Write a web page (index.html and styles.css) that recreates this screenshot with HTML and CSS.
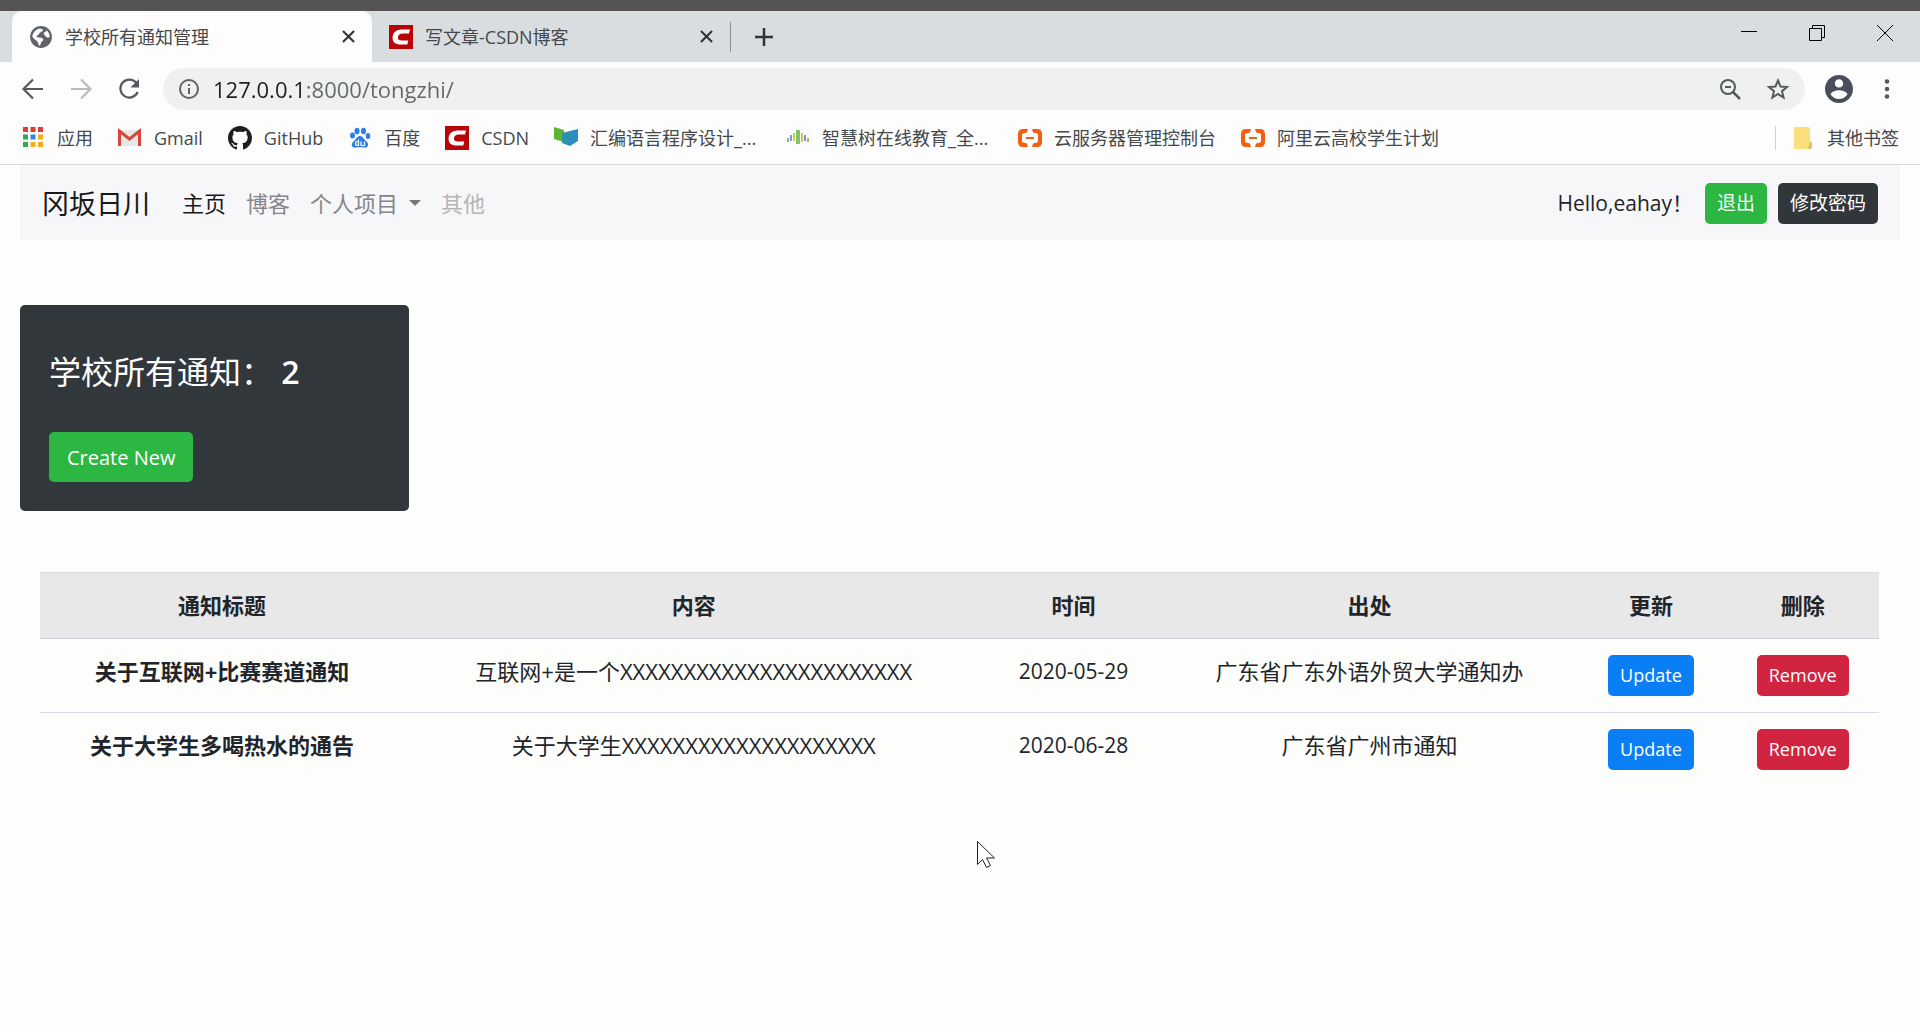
FILE: index.html
```html
<!DOCTYPE html>
<html lang="zh-CN">
<head>
<meta charset="utf-8">
<meta name="viewport" content="width=device-width, initial-scale=1">
<title>学校所有通知管理</title>
<link rel="stylesheet" href="styles.css">
</head>
<body>
<svg class="defs" aria-hidden="true">
  <symbol id="csdn" viewBox="0 0 24 24"><path fill="#b80508" d="M0 0h24v24H0z"/><path fill="#fff" d="M21 4.500l-1 4h-6c-3.200 0-4.700 1.200-5 3.500-.3 2.400.9 3.500 4 3.500h6.300l-1 4H12c-6 0-8.800-2.500-8.400-7.500C4 7 7.500 4.500 13.500 4.500z"/></symbol>
  <symbol id="aliyun" viewBox="0 0 24 24"><path fill="#f2600f" d="M10 3L9 6.500 5 7.500q-1 .3-1 1.500v6q0 1.200 1 1.500l4 1L10 21H5q-5 0-5-5V8q0-5 5-5zM14 3l1 3.500 4 1q1 .3 1 1.500v6q0 1.200-1 1.500l-4 1L14 21h5q5 0 5-5V8q0-5-5-5zM8 11h8v2H8z"/></symbol>
  <symbol id="close" viewBox="0 0 14 14"><path fill="none" stroke="#333" stroke-width="2.200" d="M1 1l12 12M13 1L1 13"/></symbol>
</svg>

<header class="browser">
  <div class="desktop-edge"></div>
  <div class="tab-strip">
    <div class="tab tab-active">
      <svg class="icon" viewBox="1 1 22 22" fill="#5f6368"><path d="M12 2C6.480 2 2 6.480 2 12s4.480 10 10 10 10-4.480 10-10S17.520 2 12 2z"/><path fill="#fdfdfd" d="M4 11.500C4.500 8 7.500 4.800 11 4.200L13.500 5c1.200 1-1 2.500-2.500 3-1.500.6-.5 2-2 2.500-1.500.4-1.500 1.500 0 1.700 2 .2 4.500.3 5 2 .4 1.600-1.500 1.600-2 3-.3 1-.5 2.500-1.500 2.800C9.500 20 9.500 17 8.500 16c-1.500-1.500-3.500-2.500-4.500-4.500zM17 5.800c1.800 1.200 3 3.500 3 6.200-1.500.8-3 .5-3.500-.5-.6-1.300-2-1.500-2-2.800 0-1.500 2.500-1.200 2.500-2.900z"/></svg>
      <span class="tab-title">学校所有通知管理</span>
      <button class="plain" aria-label="关闭标签页"><svg class="close-icon"><use href="#close"/></svg></button>
    </div>
    <div class="tab">
      <svg class="icon"><use href="#csdn"/></svg>
      <span class="tab-title">写文章-CSDN博客</span>
      <button class="plain" aria-label="关闭标签页"><svg class="close-icon"><use href="#close"/></svg></button>
    </div>
    <button class="plain new-tab" aria-label="新标签页"><svg width="18" height="18" viewBox="0 0 18 18"><path stroke="#333" stroke-width="2.500" d="M9 0v18M0 9h18"/></svg></button>
    <div class="window-controls">
      <button class="plain" aria-label="最小化"><svg width="16" height="16" viewBox="0 0 16 16"><path stroke="#000" d="M0 6.500h16"/></svg></button>
      <button class="plain" aria-label="还原"><svg width="16" height="16" viewBox="0 0 16 16"><path fill="none" stroke="#000" d="M.5 3.500h12v12H.5zM3.500 3.500v-3h12v12h-3"/></svg></button>
      <button class="plain" aria-label="关闭"><svg width="16" height="16" viewBox="0 0 16 16"><path stroke="#000" d="M0 0l16 16M16 0L0 16"/></svg></button>
    </div>
  </div>

  <div class="toolbar">
    <button class="plain" aria-label="后退"><svg class="icon" viewBox="0 0 24 24"><path fill="none" stroke="#555a5e" stroke-width="2.200" d="M22 12H3M12 2.500L2.500 12l9.500 9.500"/></svg></button>
    <button class="plain" aria-label="前进"><svg class="icon" viewBox="0 0 24 24"><path fill="none" stroke="#bbb" stroke-width="2.200" d="M2 12h19M12 2.500l9.500 9.500-9.500 9.500"/></svg></button>
    <button class="plain" aria-label="刷新"><svg class="icon" viewBox="0 0 24 24"><path fill="none" stroke="#555a5e" stroke-width="2.200" d="M19.500 6A9 9 0 1 0 20.700 15"/><path fill="#555a5e" d="M22 2v8.500h-8.500z"/></svg></button>
    <div class="omnibox">
      <svg class="icon" viewBox="0 0 24 24"><circle cx="12" cy="12" r="9" fill="none" stroke="#5f6368" stroke-width="2"/><path fill="#5f6368" d="M11 11h2v6h-2zM11 7h2v2h-2z"/></svg>
      <input class="address" type="text" aria-label="地址" value="127.0.0.1:8000/tongzhi/">
      <button class="plain" aria-label="缩放"><svg class="icon" viewBox="0 0 24 24"><circle cx="10" cy="10" r="7" fill="none" stroke="#555a5e" stroke-width="2"/><path stroke="#555a5e" stroke-width="2.500" d="M15 15l7 7"/><path stroke="#555a5e" stroke-width="2" d="M7 10h6"/></svg></button>
      <button class="plain" aria-label="收藏"><svg class="icon" viewBox="0 0 24 24"><path fill="none" stroke="#555a5e" stroke-width="2" d="M12 3.500l2.500 6 6.500.5-5 4.200 1.600 6.300L12 17l-5.600 3.500L8 14.200 3 10l6.500-.5z"/></svg></button>
    </div>
    <button class="plain profile" aria-label="用户"><svg width="28" height="28" viewBox="2 2 20 20" fill="#494e58"><path d="M12 2C6.480 2 2 6.480 2 12s4.480 10 10 10 10-4.480 10-10S17.520 2 12 2zm0 3c1.660 0 3 1.340 3 3s-1.340 3-3 3-3-1.340-3-3 1.340-3 3-3zm0 14.200c-2.500 0-4.710-1.280-6-3.220.03-1.990 4-3.080 6-3.080 1.990 0 5.970 1.090 6 3.080-1.290 1.940-3.500 3.220-6 3.220z"/></svg></button>
    <button class="plain" aria-label="菜单"><svg class="icon" viewBox="0 0 24 24" fill="#555a5e"><circle cx="12" cy="4.500" r="2.300"/><circle cx="12" cy="12" r="2.300"/><circle cx="12" cy="19.500" r="2.300"/></svg></button>
  </div>

  <nav class="bookmarks" aria-label="书签">
    <a href="#"><svg class="icon" viewBox="0 0 24 24"><path fill="#dd3b33" d="M2 1h5v5H2zM9.500 1h5v5h-5zM17 1h5v5h-5z"/><path fill="#2fa852" d="M2 8.500h5v5H2zM2 16h5v5H2z"/><path fill="#2a8ae0" d="M9.500 8.500h5v5h-5z"/><path fill="#f1ae1b" d="M17 8.500h5v5h-5zM9.500 16h5v5h-5zM17 16h5v5h-5z"/></svg>应用</a>
    <a href="#"><svg class="icon" viewBox="0 0 24 24"><path fill="#e9e7e5" d="M1 4h21v16H1z"/><path fill="none" stroke="#d5473d" stroke-width="3" d="M1.500 20V5l10 8 10-8v15"/></svg>Gmail</a>
    <a href="#"><svg class="icon" viewBox="0 0 16 16"><path fill="#1b1f23" d="M8 0C3.580 0 0 3.580 0 8c0 3.540 2.290 6.530 5.470 7.590.4.070.55-.17.55-.38 0-.19-.01-.82-.01-1.490-2.010.37-2.530-.49-2.690-.94-.09-.23-.48-.94-.82-1.130-.28-.15-.68-.52-.01-.53.63-.01 1.080.58 1.230.82.72 1.210 1.870.87 2.330.66.07-.52.28-.87.51-1.070-1.780-.2-3.640-.89-3.640-3.950 0-.87.31-1.590.82-2.150-.08-.2-.36-1.020.08-2.120 0 0 .67-.21 2.200.82.64-.18 1.320-.27 2-.27s1.360.09 2 .27c1.530-1.040 2.200-.82 2.200-.82.44 1.100.16 1.920.08 2.120.51.56.82 1.270.82 2.150 0 3.070-1.870 3.750-3.650 3.950.29.25.54.73.54 1.480 0 1.070-.01 1.930-.01 2.200 0 .21.15.46.55.38A8.010 8.010 0 0 0 16 8c0-4.420-3.580-8-8-8z"/></svg>GitHub</a>
    <a href="#"><svg class="icon" viewBox="0 0 24 24" fill="#2f7de8"><ellipse cx="4.500" cy="9.500" rx="2.500" ry="3"/><ellipse cx="9" cy="5" rx="2.500" ry="3.200"/><ellipse cx="15.500" cy="5" rx="2.500" ry="3.200"/><ellipse cx="20" cy="10" rx="2.300" ry="3"/><path d="M12 10c3 0 4 3.500 6.500 5.500 3 2.500 1.500 6.500-2 6-2-.3-6.500-.3-9 0-4 .5-5-3.500-2-6C8 13.500 9 10 12 10z"/><path fill="none" stroke="#fff" stroke-width="1.200" d="M10.500 13.500v6H8.500q-2-2 0-4h2M13 15.500v4h3.500v-4"/></svg>百度</a>
    <a href="#"><svg class="icon"><use href="#csdn"/></svg>CSDN</a>
    <a class="truncated" href="#"><svg class="icon" viewBox="0 0 24 24"><path fill="#5cb531" d="M0 1l10 3v12L0 13z"/><path fill="#2b91ad" d="M8 7l8-2v15l-8-3z"/><path fill="#2a8fc0" d="M16 5l8-2v12l-8 5z"/></svg>汇编语言程序设计_...</a>
    <a class="truncated" href="#"><svg class="icon" viewBox="0 0 24 24" stroke-width="2"><path stroke="#8fb7a0" d="M2 12v4"/><path stroke="#7a9ad8" d="M5 9v6"/><path stroke="#d9c557" d="M8 7v8"/><path stroke="#80c46a" d="M11 4v14M13 4v14"/><path stroke="#d9c557" d="M16 7v9"/><path stroke="#6e9bd0" d="M19 9v6"/><path stroke="#d99770" d="M22 12v4"/></svg>智慧树在线教育_全...</a>
    <a href="#"><svg class="icon"><use href="#aliyun"/></svg>云服务器管理控制台</a>
    <a href="#"><svg class="icon"><use href="#aliyun"/></svg>阿里云高校学生计划</a>
    <a class="other-bookmarks" href="#"><svg class="icon" viewBox="0 0 24 24"><path fill="#fbdf7d" d="M3 1h14q2 0 2 2v12l2 2v4q0 2-2 2H3z"/><path fill="#e5bf53" d="M19 15l2 2v4q0 2-2 2h-2z"/></svg>其他书签</a>
  </nav>
</header>

<main class="page">
  <nav class="navbar" aria-label="主导航">
    <a class="brand" href="#">冈坂日川</a>
    <a class="nav-active" href="#">主页</a>
    <a href="#">博客</a>
    <a class="dropdown" href="#">个人项目</a>
    <a class="nav-disabled" href="#" aria-disabled="true">其他</a>
    <span class="greeting">Hello,eahay！</span>
    <button class="btn btn-small btn-green">退出</button>
    <button class="btn btn-small btn-dark">修改密码</button>
  </nav>

  <section class="card">
    <h1>学校所有通知： <span class="count">2</span></h1>
    <button class="btn btn-green btn-create">Create New</button>
  </section>

  <table class="notices">
    <colgroup><col class="col-title"><col class="col-content"><col class="col-date"><col class="col-source"><col class="col-update"><col></colgroup>
    <thead>
      <tr><th scope="col">通知标题</th><th scope="col">内容</th><th scope="col">时间</th><th scope="col">出处</th><th scope="col">更新</th><th scope="col">删除</th></tr>
    </thead>
    <tbody>
      <tr>
        <th scope="row">关于互联网+比赛赛道通知</th>
        <td>互联网+是一个XXXXXXXXXXXXXXXXXXXXXXX</td>
        <td class="date">2020-05-29</td>
        <td>广东省广东外语外贸大学通知办</td>
        <td><button class="btn btn-row btn-blue">Update</button></td>
        <td><button class="btn btn-row btn-red">Remove</button></td>
      </tr>
      <tr>
        <th scope="row">关于大学生多喝热水的通告</th>
        <td>关于大学生XXXXXXXXXXXXXXXXXXXX</td>
        <td class="date">2020-06-28</td>
        <td>广东省广州市通知</td>
        <td><button class="btn btn-row btn-blue">Update</button></td>
        <td><button class="btn btn-row btn-red">Remove</button></td>
      </tr>
    </tbody>
  </table>
</main>
<svg class="pointer" viewBox="0 0 19 27" aria-hidden="true"><path fill="#fff" stroke="#222" d="M.5.5v23l5-5 4 8 4-2-4-7.500h8z"/></svg>
</body>
</html>
```
FILE: styles.css
```css
* { box-sizing: border-box; }
body {
  margin: 0;
  min-height: 100vh;
  background: #fdfdfc;
  color: #212529;
  font-family: "Open Sans", "Noto Sans CJK SC", sans-serif;
  font-size: 22px;
  line-height: 33px;
}
a { color: inherit; text-decoration: none; }
button, input { font: inherit; }
svg { display: block; flex: none; }
.defs { position: absolute; width: 0; height: 0; }
.icon { width: 24px; height: 24px; }
.plain { display: flex; padding: 0; border: 0; background: none; }

/* Browser frame */
.browser { font-size: 18px; line-height: 24px; background: #fdfdfd; border-bottom: 1px solid #d9d9de; }
.desktop-edge { height: 11px; background: #565356; }
.tab-strip { display: flex; align-items: center; height: 51px; padding-left: 12px; background: #d9dddf; }
.tab { display: flex; align-items: center; gap: 12px; width: 358px; height: 51px; padding: 0 17px; }
.tab-active { width: 360px; border-radius: 10px 10px 0 0; background: #fdfdfd; }
.tab-title { flex: 1; color: #45484c; }
.close-icon { width: 13px; height: 13px; }
.new-tab { align-items: center; height: 30px; padding-left: 24px; border-left: 1px solid #8d9194; }
.window-controls { display: flex; gap: 52px; margin-left: auto; padding: 0 27px 8px 0; }
.toolbar { display: flex; align-items: center; gap: 24px; height: 54px; padding: 0 21px; }
.omnibox { display: flex; flex: 1; align-items: center; gap: 24px; height: 42px; margin: 0 -2px; padding: 0 15px 0 14px; border-radius: 21px; background: #eff1f0; }
.address {
  flex: 1;
  margin-left: -12px;
  padding: 0;
  border: 0;
  outline: 0;
  background: linear-gradient(to right, #1d1f21 93px, #63676b 93px);
  background-clip: text;
  color: transparent;
  font-size: 22px;
  line-height: 33px;
}
.profile { margin: 0 -2px; }
.bookmarks { display: flex; align-items: center; gap: 25px; height: 48px; padding: 0 21px 4px; color: #45484c; }
.bookmarks a { display: flex; align-items: center; gap: 12px; white-space: nowrap; }
.bookmarks .truncated { min-width: 207px; }
.bookmarks .other-bookmarks { margin-left: auto; padding-left: 15px; border-left: 1px solid #cfd0dc; }

/* Page */
.page { padding: 0 20px; }
.navbar { display: flex; align-items: center; gap: 20px; height: 75px; padding: 1px 22px 0; background: #f7f7fa; color: #85868a; }
.brand { margin-right: 12px; color: #17191b; font-size: 27px; }
.nav-active { color: #17191b; }
.nav-disabled { color: #b5b6b8; }
.dropdown { display: flex; align-items: center; gap: 11px; }
.dropdown::after { content: ""; border: 6px solid transparent; border-top-color: #76787b; border-bottom: 0; }
.greeting { margin: 0 -8px 0 auto; color: #212529; font-size: 21px; }
.btn { display: inline-block; border: 0; border-radius: 5px; color: #fff; }
.btn-small { height: 41px; padding: 0 12px; font-size: 19px; }
.btn-small + .btn-small { margin-left: -9px; }
.btn-row { display: block; height: 41px; margin: 0 auto; padding: 0 12px; font-size: 18px; }
.btn-create { height: 50px; padding: 0 18px; font-size: 20px; }
.btn-green { background: #2bb742; }
.btn-dark { background: #31363b; }
.btn-blue { background: #0a7ff5; }
.btn-red { background: #d02440; }
.card { width: 389px; margin-top: 65px; padding: 43px 29px 29px; border-radius: 5px; background: #31373b; color: #fff; }
.card h1 { margin: 0 0 36px; font-size: 32px; font-weight: 400; line-height: 48px; }
.count { font-weight: 600; }
.notices { width: calc(100% - 41px); margin: 61px 20px 0; border-collapse: collapse; table-layout: fixed; text-align: center; }
.notices th, .notices td { padding: 16px 0; border-top: 1px solid #dadae0; vertical-align: top; }
.notices thead th { border-bottom: 1px solid #d0d0dc; background: #e8e8e9; }
.notices .date { font-size: 21px; }
.col-title { width: 19.800%; }
.col-content { width: 31.500%; }
.col-date { width: 9.800%; }
.col-source { width: 22.400%; }
.col-update { width: 8.200%; }

.pointer { position: absolute; left: 977px; top: 841px; width: 19px; height: 27px; }
```
